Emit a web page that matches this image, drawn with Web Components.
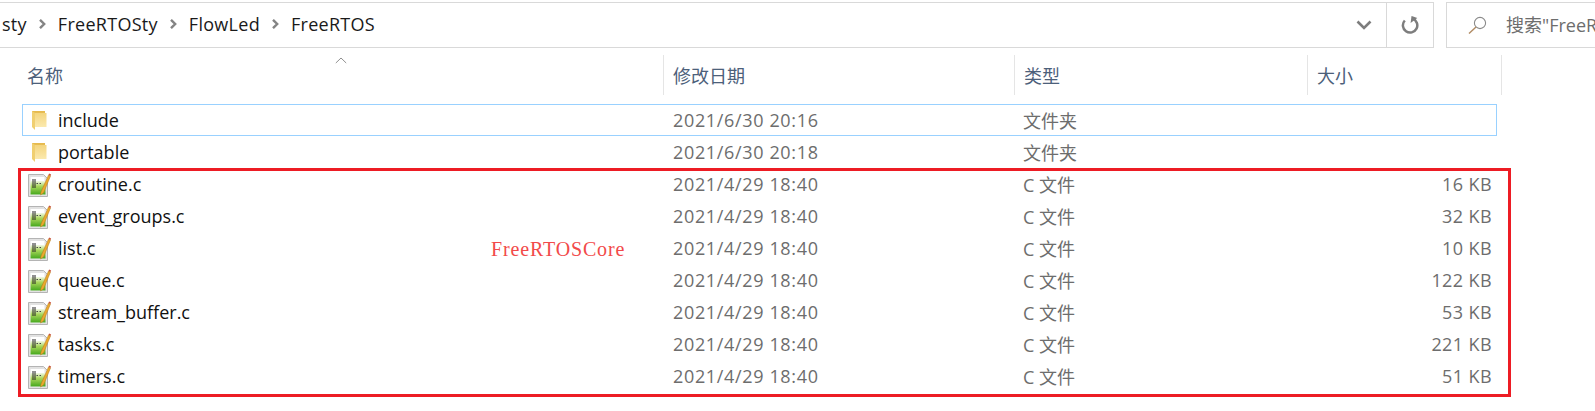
<!DOCTYPE html>
<html lang="zh">
<head>
<meta charset="utf-8">
<title>FreeRTOS</title>
<style>
  html, body { margin: 0; background: #fff; overflow: hidden; }
  body { font-family: "Open Sans", "Noto Sans CJK SC", sans-serif; }
</style>
</head>
<body>
<explorer-window>
  <address-toolbar slot="toolbar" path="sty,FreeRTOSty,FlowLed,FreeRTOS"></address-toolbar>
  <column-header slot="header"></column-header>
  <file-row kind="folder" selected name="include" date="2021/6/30 20:16" type="文件夹"></file-row>
  <file-row kind="folder" name="portable" date="2021/6/30 20:18" type="文件夹"></file-row>
  <core-group>
    <file-row kind="c" name="croutine.c" date="2021/4/29 18:40" type="C 文件" size="16 KB"></file-row>
    <file-row kind="c" name="event_groups.c" date="2021/4/29 18:40" type="C 文件" size="32 KB"></file-row>
    <file-row kind="c" name="list.c" date="2021/4/29 18:40" type="C 文件" size="10 KB"></file-row>
    <file-row kind="c" name="queue.c" date="2021/4/29 18:40" type="C 文件" size="122 KB"></file-row>
    <file-row kind="c" name="stream_buffer.c" date="2021/4/29 18:40" type="C 文件" size="53 KB"></file-row>
    <file-row kind="c" name="tasks.c" date="2021/4/29 18:40" type="C 文件" size="221 KB"></file-row>
    <file-row kind="c" name="timers.c" date="2021/4/29 18:40" type="C 文件" size="51 KB"></file-row>
  </core-group>
</explorer-window>

<script>
const FONT = '"Open Sans", "Noto Sans CJK SC", sans-serif';

class ExplorerWindow extends HTMLElement {
  constructor() {
    super();
    this.attachShadow({ mode: 'open' });
    this.shadowRoot.innerHTML = `
      <style>
        :host { display: block; width: 1595px; height: 411px; overflow: hidden; font-family: ${FONT}; }
        .list { display: flex; flex-direction: column; padding: 9px 0 0 22px; width: 1475px; }
      </style>
      <slot name="toolbar"></slot>
      <slot name="header"></slot>
      <div class="list"><slot></slot></div>
    `;
  }
}

class AddressToolbar extends HTMLElement {
  constructor() {
    super();
    this.attachShadow({ mode: 'open' });
  }

  connectedCallback() {
    const parts = this.getAttribute('path').split(',');
    const crumbs = parts.map((p, i) => `
      ${i ? `<svg class="chev" width="7" height="10" viewBox="0 0 7 10"><path d="M1 .8 5.200 5 1 9.200" fill="none" stroke="#848484" stroke-width="2.400"/></svg>` : ''}
      <span>${p}</span>`).join('');
    this.shadowRoot.innerHTML = `
      <style>
        :host { display: flex; gap: 12px; height: 46px; margin: 2px -4px 0 -2px; color: #1a1a1a; font-size: 18px; }
        .box { display: flex; align-items: center; border: 1px solid #d9d9d9; box-sizing: border-box; height: 46px; }
        .address { flex: 1; }
        .crumbs { flex: 1; display: flex; align-items: center; gap: 12px; margin-left: 3px; padding-bottom: 2px; letter-spacing: .28px; }
        .drop { margin-right: 14px; }
        .refresh { display: flex; align-items: center; justify-content: center; width: 46px; height: 100%; border-left: 1px solid #d9d9d9; }
        .search { width: 153px; color: #6d6d6d; white-space: nowrap; overflow: hidden; padding-left: 21px; gap: 19px; }
        .search span { padding-bottom: 2px; }
      </style>
      <div class="box address">
        <div class="crumbs">${crumbs}</div>
        <svg class="drop" width="16" height="10" viewBox="0 0 16 10"><path d="M1.500 1.500 8 8l6.500-6.500" fill="none" stroke="#7d7d7d" stroke-width="2.600"/></svg>
        <div class="refresh">
          <svg width="18" height="18" viewBox="0 0 18 18"><path d="M11.500 2.600A7.200 7.200 0 1 1 3.800 4.500" fill="none" stroke="#7d7d7d" stroke-width="2.500"/><path d="M10 .2V7.200L16 1.500Z" fill="#7d7d7d" transform="rotate(8 12 4)"/></svg>
        </div>
      </div>
      <div class="box search">
        <svg width="19" height="18" viewBox="0 0 19 18" style="flex:none"><circle cx="12" cy="7" r="5.600" fill="none" stroke="#8a8a8a" stroke-width="1.100"/><path d="M8 11 1 17.500" stroke="#b08a62" stroke-width="1.400"/></svg>
        <span>搜索"FreeRTOS"</span>
      </div>
    `;
  }
}

class ColumnHeader extends HTMLElement {
  constructor() {
    super();
    this.attachShadow({ mode: 'open' });
    this.shadowRoot.innerHTML = `
      <style>
        :host { display: grid; grid-template-columns: 641px 351px 293px 195px; height: 40px; margin: 7px 0 0 22px; width: 1481px; color: #4c607a; font-size: 18px; position: relative; }
        div { display: flex; align-items: center; padding-left: 9px; border-left: 1px solid #e5e5e5; }
        div:first-of-type { border-left: none; padding-left: 5px; }
        div:last-of-type { border-right: 1px solid #e5e5e5; }
        svg { position: absolute; left: 313px; top: 2px; }
      </style>
      <svg width="12" height="7" viewBox="0 0 12 7"><path d="M.8 6 6 1l5.200 5" fill="none" stroke="#8f8f8f"/></svg>
      <div>名称</div><div>修改日期</div><div>类型</div><div>大小</div>
    `;
  }
}

class FileIcon extends HTMLElement {
  constructor() {
    super();
    this.attachShadow({ mode: 'open' });
  }

  connectedCallback() {
    const folder = `
      <svg width="16" height="21" viewBox="0 0 16 21">
        <defs>
          <linearGradient id="f" x1="0" y1="0" x2="0" y2="1"><stop offset="0" stop-color="#f4d57e"/><stop offset="1" stop-color="#fbe9ae"/></linearGradient>
          <linearGradient id="b" x1="0" y1="0" x2="0" y2="1"><stop offset="0" stop-color="#e6b94c"/><stop offset="1" stop-color="#f7dc8e"/></linearGradient>
        </defs>
        <path d="M1 1h13v16H1Z" fill="url(#b)"/>
        <path d="M4 3h11.500v14H4Z" fill="url(#f)"/>
        <path d="M1 1 4 3v17L1 17Z" fill="#f0cf70"/>
      </svg>`;
    const cfile = `
      <svg width="24" height="25" viewBox="0 0 24 25" style="margin-left:2px">
        <defs>
          <linearGradient id="g" x1="0" y1="0" x2="0" y2="1"><stop offset="0" stop-color="#f2f8e6"/><stop offset=".4" stop-color="#a8d65a"/><stop offset="1" stop-color="#46a81e"/></linearGradient>
        </defs>
        <path d="M.5 2.500h15l4 4v18H.5Z" fill="#e2e2e2" stroke="#b4b4b4"/>
        <path d="M2.500 5h14v17.500h-14Z" fill="#fff"/>
        <path d="M2.500 9h15v13.500h-15Z" fill="url(#g)"/>
        <path d="M5 7v9M7 7v9" stroke="#222" stroke-width="1"/>
        <path d="M8.500 11.500H10M11.500 11.500H13" stroke="#444" stroke-width="1.200"/>
        <path d="M13 20 20.500 3l2 1-7 17-3 2Z" fill="#eaa92e" stroke="#b4791c" stroke-width=".5"/>
        <path d="M20.500 3l.6-1.500 2 1-.6 1.500Z" fill="#c8553a"/>
      </svg>`;
    this.shadowRoot.innerHTML = `
      <style>:host { display: flex; align-items: center; justify-content: center; width: 26px; height: 32px; }</style>
      ${this.getAttribute('kind') === 'folder' ? folder : cfile}
    `;
  }
}

class FileRow extends HTMLElement {
  constructor() {
    super();
    this.attachShadow({ mode: 'open' });
  }

  connectedCallback() {
    const attr = (n) => this.getAttribute(n) || '';
    this.shadowRoot.innerHTML = `
      <style>
        :host { display: grid; grid-template-columns: 641px 351px 293px 190px; height: 32px; box-sizing: border-box; align-items: center; font-size: 18px; color: #6d6d6d; white-space: nowrap; }
        :host([selected]) { outline: 1px solid #99d1ff; outline-offset: -1px; }
        .name { display: flex; align-items: center; gap: 6px; color: #111; padding-left: 4px; }
        .date { padding-left: 10px; letter-spacing: .65px; }
        .type { padding-left: 9px; }
        .size { text-align: right; padding-right: 5px; letter-spacing: .4px; }
      </style>
      <div class="name"><file-icon kind="${attr('kind')}"></file-icon><span>${attr('name')}</span></div>
      <div class="date">${attr('date')}</div>
      <div class="type">${attr('type')}</div>
      <div class="size">${attr('size')}</div>
    `;
  }
}

class CoreGroup extends HTMLElement {
  constructor() {
    super();
    this.attachShadow({ mode: 'open' });
    this.shadowRoot.innerHTML = `
      <style>
        :host { display: block; position: relative; }
        .frame { position: absolute; left: -4px; right: -14px; top: 0; bottom: -5px; border: 3px solid #ed1c24; pointer-events: none; }
        .note { position: absolute; left: 469px; top: 70px; color: #f24a4a; font: 20px "Liberation Serif", serif; letter-spacing: .85px; }
      </style>
      <slot></slot>
      <div class="frame"></div>
      <div class="note">FreeRTOSCore</div>
    `;
  }
}

customElements.define('explorer-window', ExplorerWindow);
customElements.define('address-toolbar', AddressToolbar);
customElements.define('column-header', ColumnHeader);
customElements.define('file-icon', FileIcon);
customElements.define('file-row', FileRow);
customElements.define('core-group', CoreGroup);
</script>
</body>
</html>
